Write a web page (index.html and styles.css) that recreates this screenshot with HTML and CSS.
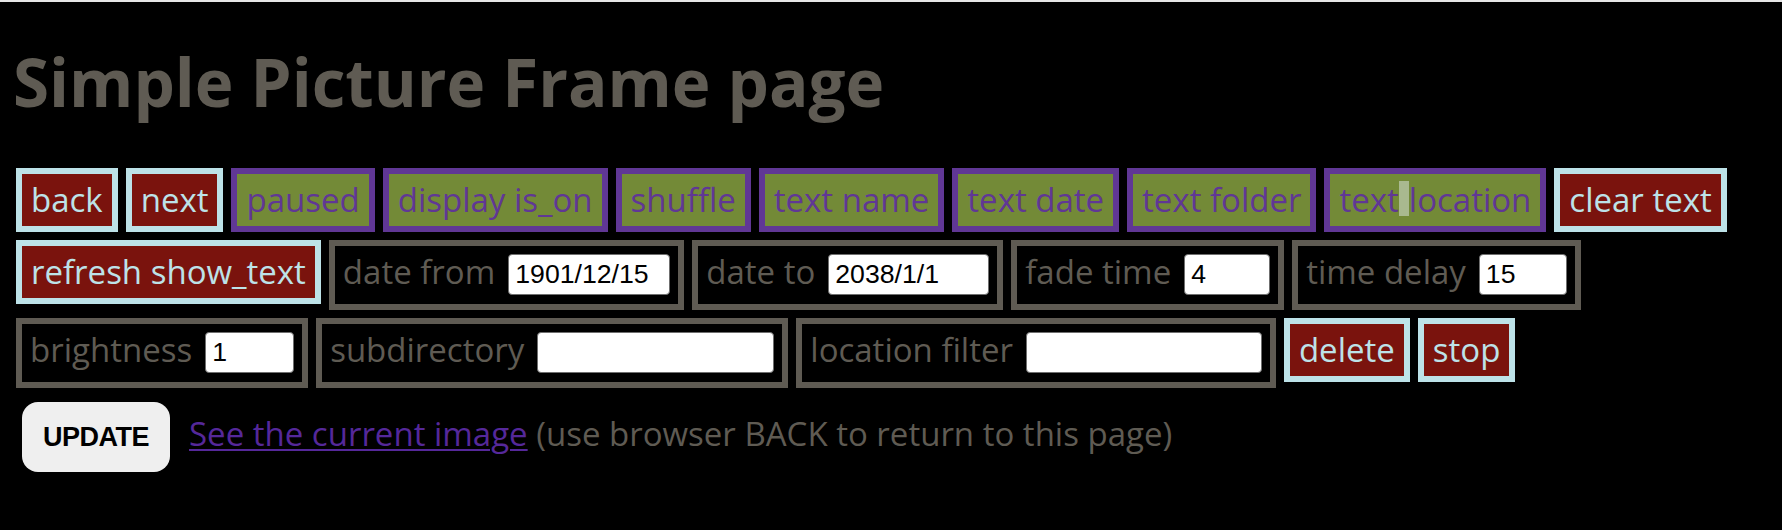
FILE: index.html
```html
<!DOCTYPE html>
<html lang="en">
<head>
<meta charset="utf-8">
<title>Simple Picture Frame page</title>
<link rel="stylesheet" href="styles.css">
</head>
<body>
<div class="topbar"></div>
<main class="page">
  <h1 class="title">Simple Picture Frame page</h1>
  <div class="controls">
    <div class="row">
      <span class="btn btn-action">back</span>
      <span class="btn btn-action">next</span>
      <span class="btn btn-toggle">paused</span>
      <span class="btn btn-toggle">display is_on</span>
      <span class="btn btn-toggle">shuffle</span>
      <span class="btn btn-toggle">text name</span>
      <span class="btn btn-toggle">text date</span>
      <span class="btn btn-toggle">text folder</span>
      <span class="btn btn-toggle">text<span class="caret"></span>location</span>
      <span class="btn btn-action">clear text</span>
    </div>
    <div class="row">
      <span class="btn btn-action">refresh show_text</span>
      <label class="field"><span class="field-label">date from</span><input class="field-input in-date" type="text" value="1901/12/15"></label>
      <label class="field"><span class="field-label">date to</span><input class="field-input in-date2" type="text" value="2038/1/1"></label>
      <label class="field"><span class="field-label">fade time</span><input class="field-input in-fade" type="text" value="4"></label>
      <label class="field"><span class="field-label">time delay</span><input class="field-input in-delay" type="text" value="15"></label>
    </div>
    <div class="row">
      <label class="field"><span class="field-label">brightness</span><input class="field-input in-bright" type="text" value="1"></label>
      <label class="field"><span class="field-label">subdirectory</span><input class="field-input in-wide" type="text" value=""></label>
      <label class="field"><span class="field-label">location filter</span><input class="field-input in-wide2" type="text" value=""></label>
      <span class="btn btn-action">delete</span>
      <span class="btn btn-action">stop</span>
    </div>
  </div>
  <div class="update-row">
    <button class="update" type="button">UPDATE</button>
    <p class="note"><a class="link" href="#">See the current image</a> (use browser BACK to return to this page)</p>
  </div>
</main>
</body>
</html>
```
FILE: styles.css
```css
html, body {
  margin: 0;
  padding: 0;
  background: #000;
}

.topbar {
  height: 2px;
  background: #e6e6e6;
}

.page {
  padding: 0 16px;
  font-family: "Open Sans", "DejaVu Sans", sans-serif;
  font-size: 33px;
  color: #5f5b53;
}

.title {
  margin: 36px 0 42px -3px;
  font-size: 65.5px;
  font-weight: 700;
  line-height: 88px;
  color: #5f5b53;
}

.controls {
  display: flex;
  flex-direction: column;
  gap: 8px;
}

.row {
  display: flex;
  align-items: flex-start;
  gap: 8px;
}

.btn {
  border: 6px solid;
  padding: 0 9px;
  line-height: 52px;
  white-space: nowrap;
}

.btn-action {
  background: #7a130d;
  border-color: #bde2e8;
  color: #bde2e8;
}

.btn-toggle {
  background: #738a37;
  border-color: #603795;
  color: #603795;
}

.caret {
  display: inline-block;
  width: 10px;
  height: 35px;
  background: #a9b98f;
  vertical-align: -4px;
}

.field {
  display: flex;
  align-items: flex-start;
  gap: 13px;
  border: 6px solid #5f5b53;
  padding: 0 8px;
}

.field-label {
  line-height: 52px;
  white-space: nowrap;
}

.field-input {
  margin: 8px 0 9px;
  height: 41px;
  box-sizing: border-box;
  border: 1px solid #6f6f6f;
  border-radius: 4px;
  background: #fff;
  color: #000;
  font-family: "Liberation Sans", Arial, sans-serif;
  font-size: 26.67px;
  padding: 0 6px;
}

.in-date { width: 162px; }
.in-date2 { width: 161px; }
.in-fade { width: 86px; }
.in-delay { width: 88px; }
.in-bright { width: 89px; }
.in-wide { width: 237px; }
.in-wide2 { width: 236px; }

.update-row {
  display: flex;
  align-items: baseline;
  gap: 19px;
  margin-top: 14px;
  padding-left: 6px;
}

.update {
  height: 70px;
  padding: 0 21px;
  border: 0;
  border-radius: 16px;
  background: #efefef;
  color: #000;
  font-family: "Liberation Sans", Arial, sans-serif;
  font-size: 27px;
  font-weight: 700;
  line-height: 70px;
  letter-spacing: -0.5px;
}

.note {
  margin: 0;
  line-height: 52px;
}

.link {
  color: #55289a;
  text-decoration: underline;
  text-decoration-thickness: 2px;
  text-underline-offset: 3px;
}
```
